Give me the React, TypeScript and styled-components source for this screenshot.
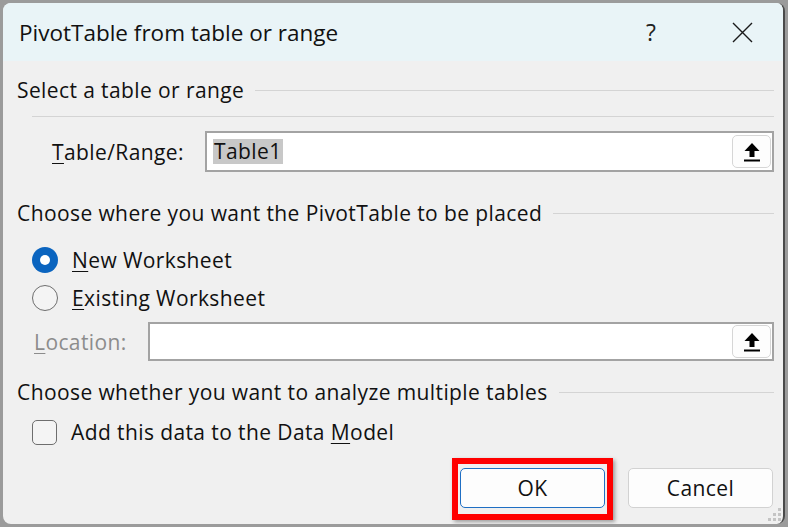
import React from "react";
import styled, { createGlobalStyle } from "styled-components";

const GlobalStyle = createGlobalStyle`
  html, body {
    margin: 0;
    padding: 0;
    background: #9b9b9b;
  }
  body {
    font-family: "Open Sans", "Noto Sans", "Liberation Sans", sans-serif;
  }
`;

const Frame = styled.div`
  width: 788px;
  height: 527px;
  box-sizing: border-box;
  padding: 3px;
  background: #9b9b9b;
  display: flex;
`;

const Dialog = styled.div`
  position: relative;
  flex: 1;
  display: flex;
  flex-direction: column;
  background: #f0f0f0;
  border-radius: 8px;
  border-right: 2px solid #4a4a4a;
  overflow: hidden;
`;

const TitleBar = styled.div`
  height: 58px;
  display: flex;
  align-items: center;
  background: #e9f4f7;
  padding-left: 16px;
  padding-right: 11px;
`;

const Title = styled.div`
  flex: 1;
  font-size: 22.5px;
  color: #111;
`;

const TitleButton = styled.div<{ $w: number; $ml?: number }>`
  width: ${(p) => p.$w}px;
  margin-left: ${(p) => p.$ml ?? 0}px;
  display: flex;
  align-items: center;
  justify-content: center;
  font-size: 23px;
  color: #222;
`;

const Body = styled.div`
  display: flex;
  flex-direction: column;
  padding: 0 9px 0 14px;
  font-size: 21px;
  letter-spacing: 0.4px;
  color: #111;
`;

const GroupHeading = styled.div<{ $mt: number }>`
  display: flex;
  align-items: center;
  gap: 11px;
  height: 28px;
  margin-top: ${(p) => p.$mt}px;
  &::after {
    content: "";
    flex: 1;
    height: 1px;
    background: #d4d4d4;
  }
`;

const Divider = styled.div`
  height: 1px;
  background: #d4d4d4;
  margin: 12px 0 0 15px;
`;

const FieldRow = styled.div<{ $mt: number; $h: number }>`
  display: flex;
  align-items: center;
  margin-top: ${(p) => p.$mt}px;
  height: ${(p) => p.$h}px;
`;

const FieldLabel = styled.div<{ $w: number; $pl: number; $muted?: boolean }>`
  width: ${(p) => p.$w}px;
  padding-left: ${(p) => p.$pl}px;
  box-sizing: border-box;
  color: ${(p) => (p.$muted ? "#8c8c8c" : "#111")};
`;

const Key = styled.span`
  text-decoration: underline;
  text-decoration-thickness: 1px;
  text-underline-offset: 3px;
`;

const InputBox = styled.div`
  flex: 1;
  height: 100%;
  box-sizing: border-box;
  border: 2px solid #a3a3a3;
  background: #fff;
  display: flex;
  align-items: center;
  padding: 0 1px 0 6px;
`;

const Selected = styled.span`
  background: #c8c8c8;
  color: #111;
  line-height: 25px;
  padding: 0 1px;
`;

const Spacer = styled.div`
  flex: 1;
`;

const RefButton = styled.div`
  width: 39px;
  height: 33px;
  box-sizing: border-box;
  border: 1px solid #d6d6d6;
  border-radius: 5px;
  background: #fdfdfd;
  display: flex;
  align-items: center;
  justify-content: center;
`;

const OptionRow = styled.label<{ $mt: number }>`
  display: flex;
  align-items: center;
  gap: 14px;
  height: 34px;
  margin-top: ${(p) => p.$mt}px;
  padding-left: 15px;
`;

const Radio = styled.span<{ $on?: boolean }>`
  width: 26px;
  height: 26px;
  box-sizing: border-box;
  border-radius: 50%;
  display: flex;
  align-items: center;
  justify-content: center;
  background: ${(p) => (p.$on ? "#0a64bf" : "#f4f4f4")};
  border: ${(p) => (p.$on ? "none" : "1.5px solid #6e6e6e")};
  &::after {
    content: "";
    display: ${(p) => (p.$on ? "block" : "none")};
    width: 10px;
    height: 10px;
    border-radius: 50%;
    background: #fff;
  }
`;

const Checkbox = styled.span`
  width: 25px;
  height: 25px;
  box-sizing: border-box;
  border-radius: 5px;
  border: 1.5px solid #6e6e6e;
  background: #f4f4f4;
`;

const ButtonRow = styled.div`
  display: flex;
  justify-content: flex-end;
  gap: 23px;
  margin-top: 19px;
  padding-right: 1px;
`;

const Button = styled.button<{ $primary?: boolean }>`
  position: relative;
  width: 145px;
  height: 40px;
  box-sizing: border-box;
  border-radius: 5px;
  background: #fdfdfd;
  border: 1px solid ${(p) => (p.$primary ? "#1f6fc4" : "#d2d2d2")};
  font-family: inherit;
  font-size: 21px;
  letter-spacing: 0.4px;
  color: #111;
  padding: 0;
`;

const Highlight = styled.span`
  position: absolute;
  top: -11px;
  bottom: -13px;
  left: -9px;
  right: -9px;
  border: 6px solid #ff0000;
  box-shadow: 2px 2px 4px rgba(0, 0, 0, 0.35);
  pointer-events: none;
`;

const Grip = styled.div`
  position: absolute;
  right: 2px;
  bottom: 3px;
  display: grid;
  grid-template-columns: repeat(3, 3px);
  gap: 2px;
  & span {
    width: 3px;
    height: 3px;
    background: #c4c4c4;
  }
`;

const UploadIcon = () => (
  <svg width="18" height="20" viewBox="0 0 18 20">
    <path d="M9 1 L16.5 9 L11.5 9 L11.5 15 L6.5 15 L6.5 9 L1.5 9 Z" fill="#000" />
    <rect x="1" y="17.5" width="16" height="2" fill="#000" />
  </svg>
);

const CloseIcon = () => (
  <svg width="21" height="21" viewBox="0 0 21 21">
    <path d="M1 1 L20 20 M20 1 L1 20" stroke="#1a1a1a" strokeWidth="1.4" />
  </svg>
);

const App: React.FC = () => {
  return (
    <Frame>
      <GlobalStyle />
      <Dialog>
        <TitleBar>
          <Title>PivotTable from table or range</Title>
          <TitleButton $w={30}>?</TitleButton>
          <TitleButton $w={60} $ml={46}>
            <CloseIcon />
          </TitleButton>
        </TitleBar>
        <Body>
          <GroupHeading $mt={15}>Select a table or range</GroupHeading>
          <Divider />
          <FieldRow $mt={14} $h={41}>
            <FieldLabel $w={188} $pl={35}>
              <Key>T</Key>able/Range:
            </FieldLabel>
            <InputBox>
              <Selected>Table1</Selected>
              <Spacer />
              <RefButton>
                <UploadIcon />
              </RefButton>
            </InputBox>
          </FieldRow>
          <GroupHeading $mt={27}>
            Choose where you want the PivotTable to be placed
          </GroupHeading>
          <OptionRow $mt={16}>
            <Radio $on />
            <span>
              <Key>N</Key>ew Worksheet
            </span>
          </OptionRow>
          <OptionRow $mt={4}>
            <Radio />
            <span>
              <Key>E</Key>xisting Worksheet
            </span>
          </OptionRow>
          <FieldRow $mt={7} $h={39}>
            <FieldLabel $w={131} $pl={17} $muted>
              <Key>L</Key>ocation:
            </FieldLabel>
            <InputBox>
              <Spacer />
              <RefButton>
                <UploadIcon />
              </RefButton>
            </InputBox>
          </FieldRow>
          <GroupHeading $mt={17}>
            Choose whether you want to analyze multiple tables
          </GroupHeading>
          <OptionRow $mt={9}>
            <Checkbox />
            <span>
              Add this data to the Data <Key>M</Key>odel
            </span>
          </OptionRow>
          <ButtonRow>
            <Button $primary>
              OK
              <Highlight />
            </Button>
            <Button>Cancel</Button>
          </ButtonRow>
        </Body>
        <Grip>
          <span style={{ gridColumn: 3 }} />
          <span style={{ gridColumn: 2 }} />
          <span />
          <span />
          <span />
          <span />
        </Grip>
      </Dialog>
    </Frame>
  );
};

export default App;
